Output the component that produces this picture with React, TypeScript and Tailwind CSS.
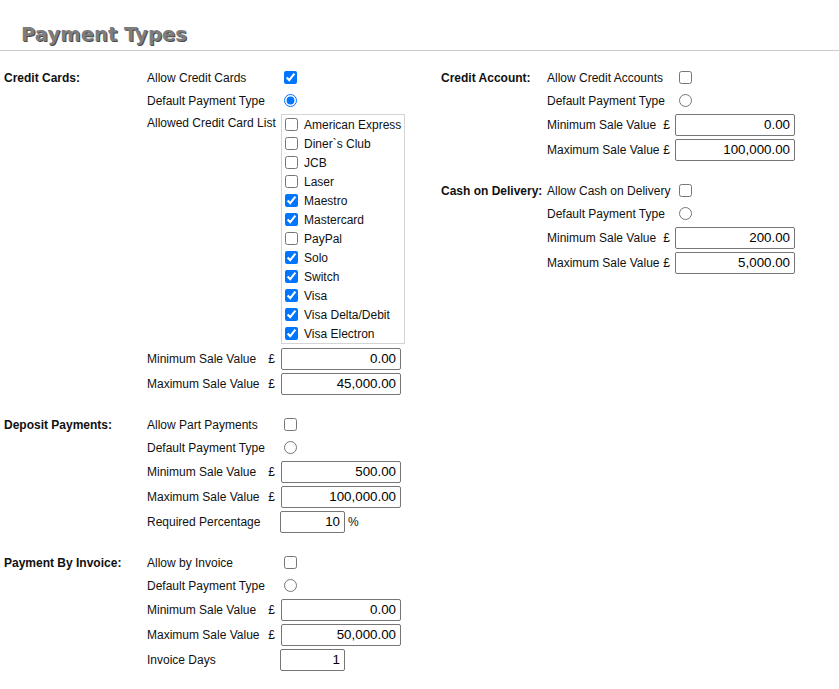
import React from "react";

type Row =
  | { kind: "check"; label: string; checked?: boolean }
  | { kind: "radio"; label: string; checked?: boolean }
  | { kind: "money"; label: string; value: string }
  | { kind: "small"; label: string; value: string; suffix?: string }
  | { kind: "list"; label: string; items: { name: string; on: boolean }[] };

interface SectionProps {
  title: string;
  titleWidth: string;
  subWidth: string;
  inputShift?: boolean;
  rows: Row[];
}

const cards = [
  { name: "American Express", on: false },
  { name: "Diner`s Club", on: false },
  { name: "JCB", on: false },
  { name: "Laser", on: false },
  { name: "Maestro", on: true },
  { name: "Mastercard", on: true },
  { name: "PayPal", on: false },
  { name: "Solo", on: true },
  { name: "Switch", on: true },
  { name: "Visa", on: true },
  { name: "Visa Delta/Debit", on: true },
  { name: "Visa Electron", on: true },
];

const Section: React.FC<SectionProps> = ({ title, titleWidth, subWidth, inputShift, rows }) => {
  return (
    <div className="flex">
      <div className={`${titleWidth} shrink-0 pl-[4px] h-[23px] flex items-center font-bold`}>
        {title}
      </div>
      <div className="flex flex-col">
        {rows.map((row, i) => {
          if (row.kind === "check" || row.kind === "radio") {
            return (
              <div key={i} className="flex h-[23px] items-center">
                <div className={`${subWidth} shrink-0`}>{row.label}</div>
                <input
                  type={row.kind === "check" ? "checkbox" : "radio"}
                  defaultChecked={row.checked}
                  readOnly
                  className="m-0 ml-[4px] w-[13px] h-[13px]"
                />
              </div>
            );
          }
          if (row.kind === "list") {
            return (
              <div key={i} className="flex">
                <div className={`${subWidth} shrink-0 pt-[4px] leading-[14px]`}>{row.label}</div>
                <div className={`${inputShift ? "ml-[1px]" : ""} mt-[2px] mb-[2px] w-[124px] border border-[#d4d4d4]`}>
                  {row.items.map((c) => (
                    <label key={c.name} className="flex h-[19px] items-center">
                      <input
                        type="checkbox"
                        defaultChecked={c.on}
                        className="m-0 ml-[3px] mr-[6px] w-[13px] h-[13px]"
                      />
                      <span>{c.name}</span>
                    </label>
                  ))}
                </div>
              </div>
            );
          }
          if (row.kind === "money") {
            return (
              <div key={i} className="flex h-[25px] items-center">
                <div className={`${subWidth} shrink-0 flex justify-between pr-[5px]`}>
                  <span>{row.label}</span>
                  <span>£</span>
                </div>
                <input
                  type="text"
                  readOnly
                  value={row.value}
                  className={`${inputShift ? "ml-[1px]" : ""} w-[120px] h-[22px] border border-[#767676] rounded-[2px] text-right pr-[4px] text-[13.33px] text-black outline-none`}
                />
              </div>
            );
          }
          return (
            <div key={i} className="flex h-[25px] items-center">
              <div className={`${subWidth} shrink-0`}>{row.label}</div>
              <input
                type="text"
                readOnly
                value={row.value}
                className="w-[65px] h-[22px] border border-[#767676] rounded-[2px] text-right pr-[4px] text-[13.33px] text-black outline-none"
              />
              {row.suffix && <span className="ml-[3px]">{row.suffix}</span>}
            </div>
          );
        })}
      </div>
    </div>
  );
};

export default function App() {
  return (
    <div className="w-full min-h-[689px] bg-white text-[12px] text-[#111] font-['Liberation_Sans',Arial,sans-serif]">
      <div className="h-[51px] border-b border-[#cccccc] flex items-end pl-[21px] pb-[4px]">
        <h1 className="font-['DejaVu_Sans',Verdana,sans-serif] font-bold text-[19.6px] leading-[23px] text-[#7d7d7d] [text-shadow:1px_1px_0_#4a4a4a]">
          Payment Types
        </h1>
      </div>

      <div className="pt-[15px]">
        <div className="flex">
          <div className="w-[437px] shrink-0">
            <Section
              title="Credit Cards:"
              titleWidth="w-[147px]"
              subWidth="w-[133px]"
              inputShift
              rows={[
                { kind: "check", label: "Allow Credit Cards", checked: true },
                { kind: "radio", label: "Default Payment Type", checked: true },
                { kind: "list", label: "Allowed Credit Card List", items: cards },
                { kind: "money", label: "Minimum Sale Value", value: "0.00" },
                { kind: "money", label: "Maximum Sale Value", value: "45,000.00" },
              ]}
            />
          </div>
          <div className="flex flex-col gap-[17px]">
            <Section
              title="Credit Account:"
              titleWidth="w-[110px]"
              subWidth="w-[128px]"
              rows={[
                { kind: "check", label: "Allow Credit Accounts" },
                { kind: "radio", label: "Default Payment Type" },
                { kind: "money", label: "Minimum Sale Value", value: "0.00" },
                { kind: "money", label: "Maximum Sale Value", value: "100,000.00" },
              ]}
            />
            <Section
              title="Cash on Delivery:"
              titleWidth="w-[110px]"
              subWidth="w-[128px]"
              rows={[
                { kind: "check", label: "Allow Cash on Delivery" },
                { kind: "radio", label: "Default Payment Type" },
                { kind: "money", label: "Minimum Sale Value", value: "200.00" },
                { kind: "money", label: "Maximum Sale Value", value: "5,000.00" },
              ]}
            />
          </div>
        </div>

        <div className="mt-[17px] flex flex-col gap-[17px]">
          <Section
            title="Deposit Payments:"
            titleWidth="w-[147px]"
            subWidth="w-[133px]"
            inputShift
            rows={[
              { kind: "check", label: "Allow Part Payments" },
              { kind: "radio", label: "Default Payment Type" },
              { kind: "money", label: "Minimum Sale Value", value: "500.00" },
              { kind: "money", label: "Maximum Sale Value", value: "100,000.00" },
              { kind: "small", label: "Required Percentage", value: "10", suffix: "%" },
            ]}
          />
          <Section
            title="Payment By Invoice:"
            titleWidth="w-[147px]"
            subWidth="w-[133px]"
            inputShift
            rows={[
              { kind: "check", label: "Allow by Invoice" },
              { kind: "radio", label: "Default Payment Type" },
              { kind: "money", label: "Minimum Sale Value", value: "0.00" },
              { kind: "money", label: "Maximum Sale Value", value: "50,000.00" },
              { kind: "small", label: "Invoice Days", value: "1" },
            ]}
          />
        </div>
      </div>
    </div>
  );
}
